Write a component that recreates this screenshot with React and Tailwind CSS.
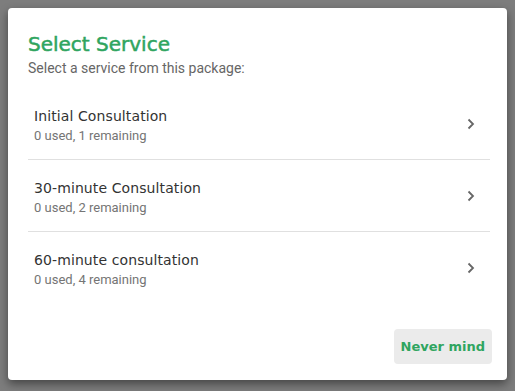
const services = [
  { name: "Initial Consultation", used: 0, remaining: 1 },
  { name: "30-minute Consultation", used: 0, remaining: 2 },
  { name: "60-minute consultation", used: 0, remaining: 4 },
];

const Chevron = () => (
  <svg width="10" height="14" viewBox="0 0 10 14" fill="none">
    <path d="M2.5 2.5L7 7L2.5 11.5" stroke="#666" strokeWidth="1.8" />
  </svg>
);

export default function App() {
  return (
    <div className="w-[515px] h-[391px] bg-[#7d7d7d] p-2 pb-[11px]">
      <div className="h-full bg-white rounded shadow-[0_4px_10px_rgba(0,0,0,0.45)] flex flex-col pl-5 pr-[17px] pt-[24px] pb-[16px]">
        <h2 className="text-[20px] leading-6 font-normal text-[#2fa55f] font-['DejaVu_Sans',sans-serif] [-webkit-text-stroke:0.5px_#2fa55f]">
          Select Service
        </h2>
        <p className="mt-[2px] text-[14px] text-[#666] font-['Roboto',sans-serif]">
          Select a service from this package:
        </p>
        <div className="mt-[9px] flex flex-col">
          {services.map((s, i) => (
            <div
              key={s.name}
              className={
                "h-[72px] flex items-center justify-between pl-[6px] pr-[14px] " +
                (i < services.length - 1 ? "border-b border-[#e0e0e0]" : "")
              }
            >
              <div className="flex flex-col pt-[2px]">
                <span className="text-[14px] leading-5 text-[#333] font-['DejaVu_Sans',sans-serif] tracking-[0.1px]">
                  {s.name}
                </span>
                <span className="mt-[2px] text-[13px] leading-4 text-[#757575] font-['Roboto',sans-serif]">
                  {s.used} used, {s.remaining} remaining
                </span>
              </div>
              <Chevron />
            </div>
          ))}
        </div>
        <div className="mt-auto flex justify-end">
          <button className="h-[35px] px-[7px] rounded-sm bg-[#ebebeb] text-[13px] font-bold text-[#2fa55f] font-['DejaVu_Sans',sans-serif] -mr-[2px]">
            Never mind
          </button>
        </div>
      </div>
    </div>
  );
}
